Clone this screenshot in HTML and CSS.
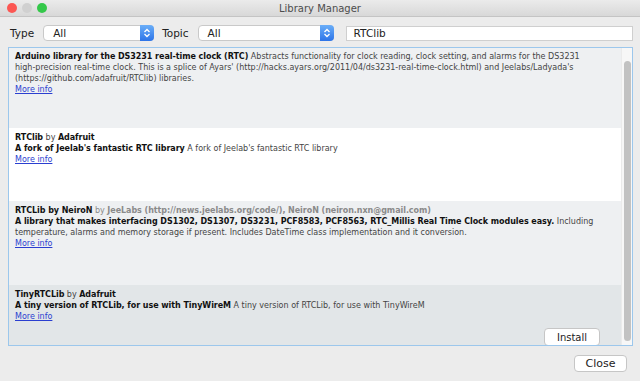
FILE: index.html
```html
<!DOCTYPE html>
<html lang="en">
<head>
    <meta charset="UTF-8">
    <title>Library Manager</title>
    <link rel="stylesheet" href="styles.css">
</head>
<body>

    <div class="window">
        <!-- barre de titre -->
        <div class="titlebar">
            <div class="lights">
                <span class="light red"></span>
                <span class="light grey"></span>
                <span class="light green"></span>
            </div>
            <div class="title">Library Manager</div>
            <div></div>
        </div>

        <!-- filtres -->
        <div class="toolbar">
            <span class="label">Type</span>
            <div class="select type-select">
                <span class="value">All</span>
                <span class="arrow">
                    <svg width="8" height="10" viewBox="0 0 8 10"><path d="M1.5 4 L4 1.5 L6.5 4 M1.5 6 L4 8.5 L6.5 6" fill="none" stroke="#fff" stroke-width="1.3"/></svg>
                </span>
            </div>
            <span class="label">Topic</span>
            <div class="select topic-select">
                <span class="value">All</span>
                <span class="arrow">
                    <svg width="8" height="10" viewBox="0 0 8 10"><path d="M1.5 4 L4 1.5 L6.5 4 M1.5 6 L4 8.5 L6.5 6" fill="none" stroke="#fff" stroke-width="1.3"/></svg>
                </span>
            </div>
            <div class="search">RTClib</div>
        </div>

        <!-- liste des librairies -->
        <div class="list">
            <div class="items">
                <div class="item odd first">
                    <p><b>Arduino library for the DS3231 real-time clock (RTC)</b> Abstracts functionality for clock reading, clock setting, and alarms for the DS3231 <span class="nowrap">high-precision</span> real-time clock. This is a splice of Ayars' (http://hacks.ayars.org/2011/04/ds3231-real-time-clock.html) and Jeelabs/Ladyada's (https://github.com/adafruit/RTClib) libraries.</p>
                    <a href="#">More info</a>
                </div>
                <div class="item">
                    <p><b>RTClib</b> by <b>Adafruit</b></p>
                    <p><b>A fork of Jeelab's fantastic RTC library</b> A fork of Jeelab's fantastic RTC library</p>
                    <a href="#">More info</a>
                </div>
                <div class="item odd">
                    <p><b>RTCLib by NeiroN</b> <span class="muted">by <b>JeeLabs (http://news.jeelabs.org/code/), NeiroN (neiron.nxn@gmail.com)</b></span></p>
                    <p><b>A library that makes interfacing DS1302, DS1307, DS3231, PCF8583, PCF8563, RTC_Millis Real Time Clock modules easy.</b> Including temperature, alarms and memory storage if present. Includes DateTime class implementation and it conversion.</p>
                    <a href="#">More info</a>
                </div>
                <div class="item selected">
                    <p><b>TinyRTCLib</b> by <b>Adafruit</b></p>
                    <p><b>A tiny version of RTCLib, for use with TinyWireM</b> A tiny version of RTCLib, for use with TinyWireM</p>
                    <a href="#">More info</a>
                    <div class="actions"><button class="btn install">Install</button></div>
                </div>
            </div>
            <div class="scrollbar"><div class="thumb"></div></div>
        </div>

        <div class="footer">
            <button class="btn close">Close</button>
        </div>
    </div>

</body>
</html>
```

FILE: styles.css
```css
body {
    margin: 0;
    font-family: 'DejaVu Sans', Verdana, sans-serif;
    background-color: #ececec;
    color: #222;
}

.window {
    width: 640px;
    height: 381px;
    display: flex;
    flex-direction: column;
    overflow: hidden;
}

.titlebar {
    height: 16px;
    display: grid;
    grid-template-columns: 1fr auto 1fr;
    align-items: center;
    background: linear-gradient(#ebebeb, #d8d8d8);
    border-bottom: 1px solid #c4c4c4;
}

.lights {
    display: flex;
    gap: 5px;
    padding-left: 7px;
}

.light {
    width: 10px;
    height: 10px;
    border-radius: 50%;
}

.red { background-color: #fc5753; }
.grey { background-color: #d0d0d0; }
.green { background-color: #34c84a; }

.title {
    font-size: 10px;
    color: #4d4d4d;
}

.toolbar {
    display: flex;
    align-items: center;
    margin-top: 8px;
    padding-left: 10px;
    height: 16px;
}

.label {
    font-size: 10.5px;
    color: #222;
}

.select {
    display: flex;
    align-items: center;
    height: 16px;
    box-sizing: border-box;
    background-color: #fff;
    border: 1px solid #c9c9c9;
    border-radius: 4px;
    margin-left: 9px;
    margin-right: 8px;
}

.type-select { width: 111px; }
.topic-select { width: 136px; margin-right: 12px; }

.select .value {
    flex: 1;
    font-size: 10.5px;
    padding-left: 9px;
}

.select .arrow {
    width: 14px;
    height: 16px;
    margin: -1px -1px -1px 0;
    border-radius: 0 4px 4px 0;
    background: linear-gradient(#6aaef8, #2d74e8);
    display: flex;
    align-items: center;
    justify-content: center;
}

.search {
    width: 287px;
    height: 15px;
    box-sizing: border-box;
    background-color: #fff;
    border: 1px solid #cfcfcf;
    font-size: 10.5px;
    line-height: 13px;
    padding-left: 7px;
}

.list {
    margin: 6px 0 0 8px;
    width: 625px;
    height: 299px;
    box-sizing: border-box;
    border: 1px solid #9cc7ec;
    background-color: #fff;
    display: flex;
    overflow: hidden;
}

.items {
    flex: 1;
}

.item {
    padding: 4px 6px 36px 6px;
    font-size: 8px;
    line-height: 11px;
    color: #444;
    background-color: #fff;
}

.item.first {
    padding-top: 3px;
    padding-bottom: 33px;
}

.item b {
    color: #111;
    letter-spacing: -0.05px;
}

.nowrap {
    white-space: nowrap;
}

.item.odd {
    background-color: #eef0f2;
}

.item.selected {
    background-color: #e2e6e8;
    padding-bottom: 0;
}

.item p {
    margin: 0;
}

.item .muted,
.item .muted b {
    color: #8a8a8a;
}

.item a {
    color: #2b3fd0;
}

.actions {
    display: flex;
    justify-content: flex-end;
    padding: 6px 15px 0 0;
}

.btn {
    font-family: 'DejaVu Sans', Verdana, sans-serif;
    background-color: #fff;
    border: 1px solid #c6c6c6;
    border-radius: 4px;
    color: #222;
    padding: 0;
}

.install {
    width: 56px;
    height: 18px;
    font-size: 10px;
}

.scrollbar {
    width: 11px;
    background-color: #f7f7f7;
    border-left: 1px solid #ebebeb;
    padding: 13px 0 4px 2px;
    box-sizing: border-box;
}

.thumb {
    width: 7px;
    height: 100%;
    border-radius: 4px;
    background-color: #c2c2c2;
}

.footer {
    display: flex;
    justify-content: flex-end;
    padding: 9px 13px 0 0;
}

.close {
    width: 53px;
    height: 17px;
    font-size: 11px;
}
```
